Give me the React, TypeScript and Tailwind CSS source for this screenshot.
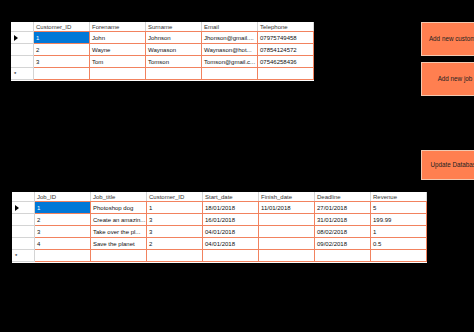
import React from "react";

type Table = {
  headers: string[];
  rows: string[][];
};

const customers: Table = {
  headers: ["Customer_ID", "Forename", "Surname", "Email", "Telephone"],
  rows: [
    ["1", "John", "Johnson", "Jhonson@gmail....", "07975749458"],
    ["2", "Wayne", "Waynason", "Waynason@hot...", "07854124572"],
    ["3", "Tom", "Tomson", "Tomson@gmail.c...", "07546258436"],
  ],
};

const jobs: Table = {
  headers: ["Job_ID", "Job_title", "Customer_ID", "Start_date", "Finish_date", "Deadline", "Revenue"],
  rows: [
    ["1", "Photoshop dog", "1", "18/01/2018", "11/01/2018", "27/01/2018", "5"],
    ["2", "Create an amazin...", "3", "16/01/2018", "", "31/01/2018", "199.99"],
    ["3", "Take over the pl...", "3", "04/01/2018", "", "08/02/2018", "1"],
    ["4", "Save the planet", "2", "04/01/2018", "", "09/02/2018", "0.5"],
  ],
};

function Grid({ table }: { table: Table }) {
  const blank = table.headers.map(() => "");
  const rows = [...table.rows, blank];

  return (
    <div className="flex w-fit flex-col bg-white text-[6px] leading-none font-['Liberation_Sans',Arial,sans-serif]">
      <div className="flex h-[9px]">
        <div className="w-[23px] shrink-0 border-r border-[#d4d4d4]" />
        {table.headers.map((h) => (
          <div key={h} className="w-[56px] shrink-0 border-r border-[#d4d4d4] pl-[2px] pt-[1.5px] text-[#333]">
            {h}
          </div>
        ))}
      </div>
      {rows.map((row, i) => {
        const isNew = i === rows.length - 1;
        return (
          <div key={i} className="flex h-[12px]">
            <div className="flex w-[23px] shrink-0 items-center border-t border-r border-[#d4d4d4] pl-[3px] text-black">
              {i === 0 && (
                <svg width="4" height="6" viewBox="0 0 4 6">
                  <path d="M0 0 L4 3 L0 6 Z" fill="#000" />
                </svg>
              )}
              {isNew && <span className="text-[6px]">*</span>}
            </div>
            {row.map((cell, j) => {
              const selected = i === 0 && j === 0;
              return (
                <div
                  key={j}
                  className={
                    "flex w-[56px] shrink-0 items-center overflow-hidden whitespace-nowrap border-t border-r border-[#f2825e] pl-[2px] " +
                    (selected ? "bg-[#0078d7] text-white" : "text-[#111]")
                  }
                >
                  {cell}
                </div>
              );
            })}
          </div>
        );
      })}
      <div className="flex h-[2px]">
        <div className="w-[23px] shrink-0 border-t border-[#d4d4d4]" />
        {table.headers.map((h) => (
          <div key={h} className="w-[56px] shrink-0 border-t border-[#f2825e]" />
        ))}
      </div>
    </div>
  );
}

function ActionButton({ label, tall }: { label: string; tall?: boolean }) {
  return (
    <div
      className={
        "flex w-[68px] shrink-0 items-center justify-center whitespace-nowrap border border-[#f1c8b0] bg-[#ff7f50] text-[6.3px] text-[#222] font-['Liberation_Sans',Arial,sans-serif] " +
        (tall ? "h-[34px]" : "h-[30px]")
      }
    >
      {label}
    </div>
  );
}

export default function App() {
  return (
    <div className="flex h-[332px] w-[474px] overflow-hidden bg-black">
      <div className="flex w-[410px] shrink-0 flex-col items-start">
        <div className="ml-[11px] mt-[22px]">
          <Grid table={customers} />
        </div>
        <div className="ml-[12px] mt-[111px]">
          <Grid table={jobs} />
        </div>
      </div>
      <div className="ml-[11px] flex flex-col">
        <div className="mt-[22px]">
          <ActionButton label="Add new customer" tall />
        </div>
        <div className="mt-[6px]">
          <ActionButton label="Add new job" tall />
        </div>
        <div className="mt-[54px]">
          <ActionButton label="Update Database" />
        </div>
      </div>
    </div>
  );
}
